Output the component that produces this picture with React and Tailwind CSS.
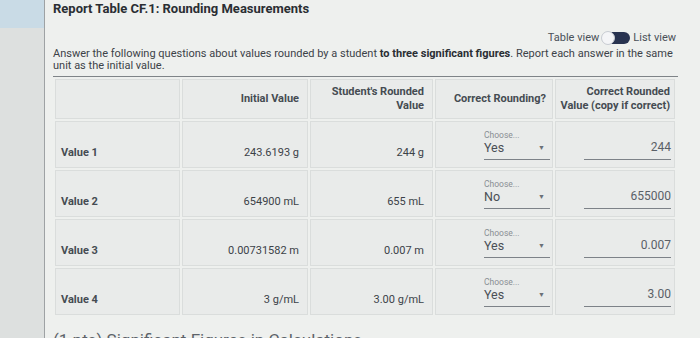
import React from 'react';

const rows = [
  { label: 'Value 1', initial: '243.6193 g', student: '244 g', choice: 'Yes', correct: '244' },
  { label: 'Value 2', initial: '654900 mL', student: '655 mL', choice: 'No', correct: '655000' },
  { label: 'Value 3', initial: '0.00731582 m', student: '0.007 m', choice: 'Yes', correct: '0.007' },
  { label: 'Value 4', initial: '3 g/mL', student: '3.00 g/mL', choice: 'Yes', correct: '3.00' },
];

const ChooseSelect = ({ value }) => (
  <div className="ml-[48px] w-[66px] border-b border-[#7d8288] pb-[3px]">
    <div className="text-[8.5px] leading-[10px] text-[#8a8f95]">Choose...</div>
    <div className="flex items-center justify-between text-[12.5px] leading-[16px] text-[#4a4f55]">
      <span>{value}</span>
      <span className="mr-[5px] text-[7px] text-[#6b7077]">▼</span>
    </div>
  </div>
);

const App = () => {
  return (
    <div className="flex h-[338px] w-[700px] overflow-hidden bg-[#eef0ee] font-['Roboto',sans-serif] text-[#3c4248]">
      {/* left strip */}
      <div className="flex w-[45px] shrink-0 flex-col border-r border-[#9ea2a4] bg-[#dde0df]">
        <div className="h-[28px] bg-[#c9dbe6]"></div>
      </div>

      <div className="flex min-w-0 flex-1 flex-col pl-[8px] pr-[22px]">
        <h1 className="pt-[1px] text-[13px] font-bold leading-[16px] text-[#2a2e33]">
          Report Table CF.1: Rounding Measurements
        </h1>

        <div className="mt-[14px] flex items-center justify-end gap-[3px] pr-[2px] text-[11px] leading-[14px] text-[#4a5058]">
          <span>Table view</span>
          <span className="relative flex h-[12px] w-[28px] items-center rounded-full bg-[#283350]">
            <span className="absolute -left-[1px] h-[14px] w-[14px] rounded-full border border-[#c8ccd2] bg-[#f4f5f7]"></span>
          </span>
          <span>List view</span>
        </div>

        <p className="mt-[3px] text-[11px] leading-[12px] text-[#3c4248]">
          Answer the following questions about values rounded by a student <b className="text-[#2a2e33]">to three significant figures</b>. Report each answer in the same
          unit as the initial value.
        </p>

        <div className="mt-[4px] border-t border-[#7f8488]">
          <table className="w-[624px] border-separate border-spacing-[2px] text-[11px]">
            <thead>
              <tr className="h-[40px] font-bold text-[#454b52]">
                <th className="w-[125px] border border-[#dadddc] bg-[#e9ebea]"></th>
                <th className="w-[126px] border border-[#dadddc] bg-[#e9ebea] pr-[8px] text-right">Initial Value</th>
                <th className="w-[123px] border border-[#dadddc] bg-[#e9ebea] pr-[8px] text-right leading-[14px]">
                  Student's Rounded
                  <br />
                  Value
                </th>
                <th className="w-[118px] border border-[#dadddc] bg-[#e9ebea] pr-[6px] text-right">Correct Rounding?</th>
                <th className="border border-[#dadddc] bg-[#e9ebea] pr-[4px] text-right leading-[14px]">
                  Correct Rounded
                  <br />
                  Value (copy if correct)
                </th>
              </tr>
            </thead>
            <tbody>
              {rows.map((row) => (
                <tr key={row.label} className="h-[47px]">
                  <td className="border border-[#dadddc] bg-[#e9ebea] pb-[6px] pl-[5px] align-bottom font-bold text-[#454b52]">
                    {row.label}
                  </td>
                  <td className="border border-[#dadddc] bg-[#e9ebea] pb-[6px] pr-[8px] text-right align-bottom">
                    {row.initial}
                  </td>
                  <td className="border border-[#dadddc] bg-[#e9ebea] pb-[6px] pr-[8px] text-right align-bottom">
                    {row.student}
                  </td>
                  <td className="border border-[#dadddc] bg-[#e9ebea] pb-[7px] align-bottom">
                    <ChooseSelect value={row.choice} />
                  </td>
                  <td className="border border-[#dadddc] bg-[#e9ebea] pb-[7px] align-bottom">
                    <div className="ml-[28px] mr-[3px] border-b border-[#7d8288] pb-[4px] text-right text-[12px] leading-[16px] text-[#5a6067]">
                      {row.correct}
                    </div>
                  </td>
                </tr>
              ))}
            </tbody>
          </table>
        </div>

        <div className="mt-[13px] whitespace-nowrap text-[17px] leading-[20px] text-[#5d6369]">
          (1 pts) Significant Figures in Calculations
        </div>
      </div>
    </div>
  );
};

export default App;
